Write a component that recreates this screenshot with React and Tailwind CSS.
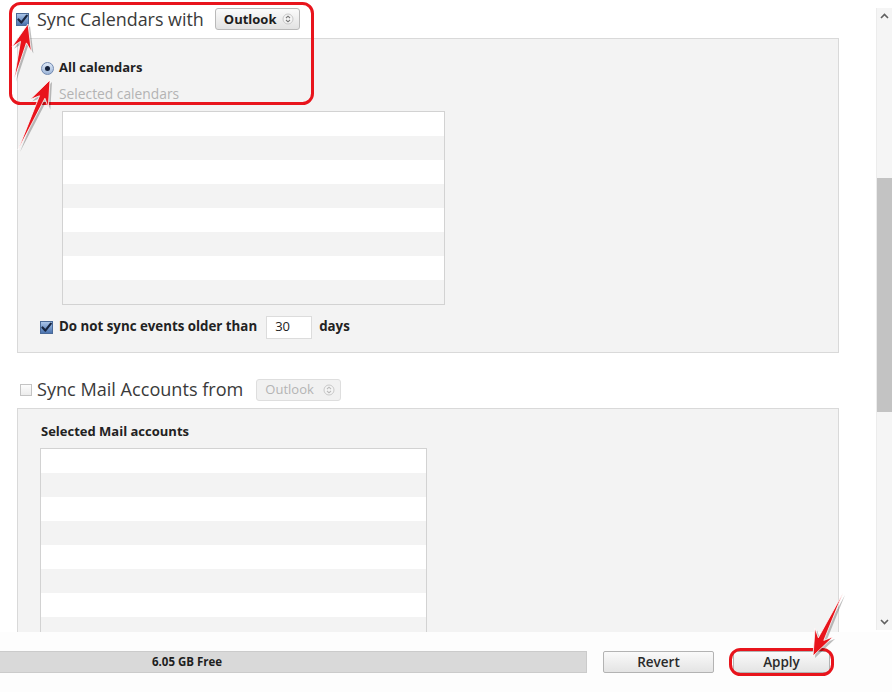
import React from 'react'

const font = { fontFamily: '"Open Sans", "Noto Sans", Arial, sans-serif' }

const CheckOn = () => (
    <div className='w-[13px] h-[13px] border border-[#4a6a98] bg-gradient-to-b from-[#a9c4e8] to-[#4b74b0] flex items-center justify-center shrink-0'>
        <svg width='11' height='11' viewBox='0 0 11 11'>
            <path d='M1.5 5.5 L4.3 8.6 L9.8 1.6' fill='none' stroke='#17253f' strokeWidth='2.2' strokeLinecap='round' strokeLinejoin='round' />
        </svg>
    </div>
)

const CheckOff = () => (
    <div className='w-[12px] h-[12px] border border-[#c4c4c4] bg-gradient-to-b from-[#fdfdfd] to-[#ececec] shrink-0' />
)

const UpDown = ({ color }) => (
    <svg width='12' height='12' viewBox='0 0 12 12' className='shrink-0'>
        <circle cx='6' cy='6' r='5' fill='#f4f4f4' stroke='#c9c9c9' strokeWidth='1' />
        <path d='M4 5 L6 3.2 L8 5 M4 7 L6 8.8 L8 7' fill='none' stroke={color} strokeWidth='1.1' />
    </svg>
)

const Select = ({ disabled }) => (
    <div className={`h-[22px] w-[85px] flex items-center justify-between pl-[8px] pr-[5px] rounded-[3px] border ${disabled ? 'border-[#dedede] bg-[#f1f1f1] text-[#b4b4b4] font-normal' : 'border-[#b9b9b9] bg-gradient-to-b from-[#fbfbfb] to-[#e2e2e2] text-[#1d1d1d] font-bold'} text-[13px] leading-none`}>
        <span>Outlook</span>
        <UpDown color={disabled ? '#bbbbbb' : '#777777'} />
    </div>
)

const StripedList = ({ rows, width }) => (
    <div className={`border border-[#d2d2d2] bg-white ${width}`}>
        {Array.from({ length: rows }).map((_, i) => (
            <div key={i} className={`h-[24px] ${i % 2 ? 'bg-[#f3f3f3]' : 'bg-white'}`} />
        ))}
    </div>
)

// arrow polygon from tail to tip
const arrowPts = (sx, sy, tx, ty, L = 26, W = 10, w = 3) => {
    const dx = tx - sx, dy = ty - sy
    const len = Math.hypot(dx, dy)
    const ux = dx / len, uy = dy / len
    const nx = -uy, ny = ux
    const p = (back, off) => `${(tx - ux * back + nx * off).toFixed(1)},${(ty - uy * back + ny * off).toFixed(1)}`
    return [p(0, 0), p(L, W), p(L * 0.72, w), `${sx},${sy}`, p(L * 0.72, -w), p(L, -W)].join(' ')
}

const Arrow = ({ sx, sy, tx, ty }) => (
    <g>
        <polygon points={arrowPts(sx + 2, sy + 2, tx + 2, ty + 2)} fill='#000' opacity='0.25' />
        <polygon points={arrowPts(sx, sy, tx, ty)} fill='#e8141c' stroke='#ffffff' strokeWidth='0.8' strokeLinejoin='round' />
    </g>
)

const Scrollbar = () => (
    <div className='w-[16px] flex flex-col pt-[8px] pb-[2px] bg-white'>
        <div className='flex-1 flex flex-col bg-[#f5f5f5] border-l border-[#ececec]'>
            <div className='h-[16px] flex items-center justify-center'>
                <svg width='9' height='6' viewBox='0 0 9 6'><path d='M1 5 L4.5 1.5 L8 5' fill='none' stroke='#606060' strokeWidth='1.6' /></svg>
            </div>
            <div className='h-[154px]' />
            <div className='h-[234px] bg-[#c3c3c3]' />
            <div className='flex-1' />
            <div className='h-[16px] flex items-center justify-center'>
                <svg width='9' height='6' viewBox='0 0 9 6'><path d='M1 1 L4.5 4.5 L8 1' fill='none' stroke='#606060' strokeWidth='1.6' /></svg>
            </div>
        </div>
    </div>
)

const App = () => {
    return (
        <div className='relative w-[892px] h-[692px] overflow-hidden bg-white text-[#333]' style={font}>
            <div className='flex h-[632px] overflow-hidden'>
                <div className='w-[876px] pl-[17px] flex flex-col'>
                    {/* calendars */}
                    <div className='h-[38px] shrink-0 flex items-center -ml-[1px]'>
                        <CheckOn />
                        <span className='ml-[8px] text-[17.9px] text-[#3a3a3a]'>Sync Calendars with</span>
                        <div className='ml-[11px]'><Select /></div>
                    </div>
                    <div className='w-[822px] h-[315px] shrink-0 bg-[#f3f3f3] border border-[#d9d9d9] flex flex-col'>
                        <div className='mt-[21px] h-[16px] flex items-center pl-[23px]'>
                            <div className='w-[13px] h-[13px] rounded-full border border-[#7189b0] bg-gradient-to-b from-[#dfe9f7] to-[#9db5d8] flex items-center justify-center'>
                                <div className='w-[5px] h-[5px] rounded-full bg-[#14213a]' />
                            </div>
                            <span className='ml-[5px] text-[13px] font-bold text-[#222]'>All calendars</span>
                        </div>
                        <div className='mt-[10px] h-[16px] flex items-center pl-[41px] text-[13.8px] text-[#b3b3b3]'>Selected calendars</div>
                        <div className='mt-[9px] pl-[44px]'>
                            <StripedList rows={8} width='w-[383px]' />
                        </div>
                        <div className='mt-[10px] h-[24px] flex items-center pl-[22px]'>
                            <CheckOn />
                            <span className='ml-[6px] text-[13.3px] font-bold text-[#222]'>Do not sync events older than</span>
                            <div className='ml-[9px] w-[46px] h-[23px] bg-white border border-[#dcdcdc] flex items-center pl-[8px] text-[13px] text-[#222]'>30</div>
                            <span className='ml-[7px] text-[13.3px] font-bold text-[#222]'>days</span>
                        </div>
                    </div>

                    {/* mail */}
                    <div className='h-[55px] pt-[18px] flex items-center shrink-0 ml-[3px]'>
                        <CheckOff />
                        <span className='ml-[5px] text-[18.1px] text-[#3a3a3a]'>Sync Mail Accounts from</span>
                        <div className='ml-[13px]'><Select disabled /></div>
                    </div>
                    <div className='w-[822px] h-[240px] shrink-0 bg-[#f3f3f3] border border-[#d9d9d9] border-b-0 flex flex-col'>
                        <div className='mt-[15px] h-[16px] flex items-center pl-[23px] text-[13px] font-bold text-[#222]'>Selected Mail accounts</div>
                        <div className='mt-[8px] pl-[22px]'>
                            <StripedList rows={9} width='w-[387px]' />
                        </div>
                    </div>
                </div>
                <Scrollbar />
            </div>

            {/* bottom bar */}
            <div className='h-[60px] flex items-center bg-[#fdfdfd]'>
                <div className='w-[587px] h-[22px] bg-[#d9d9d9] border border-l-0 border-[#cbcbcb] flex items-center pl-[152px] text-[11.5px] font-bold text-[#1e1e1e]'>
                    6.05 GB Free
                </div>
                <button className='ml-[16px] w-[111px] h-[22px] rounded-[2px] border border-[#b3b3b3] bg-gradient-to-b from-[#fafafa] to-[#e4e4e4] text-[13.5px] font-semibold text-[#2a2a2a]'>Revert</button>
                <button className='ml-[19px] w-[97px] h-[22px] rounded-[2px] border border-[#b3b3b3] bg-gradient-to-b from-[#fafafa] to-[#e4e4e4] text-[13.5px] font-semibold text-[#2a2a2a]'>Apply</button>
            </div>

            {/* annotations */}
            <svg className='absolute inset-0 pointer-events-none' width='892' height='692' viewBox='0 0 892 692'>
                <rect x='10.5' y='3.5' width='302' height='100' rx='10' fill='none' stroke='#e8141c' strokeWidth='3' />
                <rect x='730.5' y='649.5' width='102' height='25' rx='10' fill='none' stroke='#e8141c' strokeWidth='3' />
                <Arrow sx={14} sy={80} tx={28} ty={24} />
                <Arrow sx={18} sy={150} tx={50} ty={80} />
                <Arrow sx={843} sy={593} tx={813} ty={656} />
            </svg>
        </div>
    )
}

export default App
